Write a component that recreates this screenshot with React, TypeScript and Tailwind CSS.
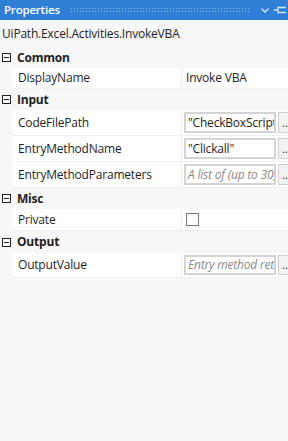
import React from 'react';

type Prop = {
  name: string;
  kind: 'text' | 'box' | 'hint' | 'check';
  value?: string;
  h: string;
};

const groups: { title: string; h: string; props: Prop[] }[] = [
  {
    title: 'Common',
    h: 'h-[21px]',
    props: [{ name: 'DisplayName', kind: 'text', value: 'Invoke VBA', h: 'h-[21px]' }],
  },
  {
    title: 'Input',
    h: 'h-[21px]',
    props: [
      { name: 'CodeFilePath', kind: 'box', value: '"CheckBoxScript.txt"', h: 'h-[26px]' },
      { name: 'EntryMethodName', kind: 'box', value: '"Clickall"', h: 'h-[26px]' },
      { name: 'EntryMethodParameters', kind: 'hint', value: 'A list of (up to 30) parameters', h: 'h-[26px]' },
    ],
  },
  {
    title: 'Misc',
    h: 'h-[21px]',
    props: [{ name: 'Private', kind: 'check', h: 'h-[22px]' }],
  },
  {
    title: 'Output',
    h: 'h-[22px]',
    props: [{ name: 'OutputValue', kind: 'hint', value: 'Entry method return value', h: 'h-[25px]' }],
  },
];

function Minus() {
  return (
    <svg width="9" height="9" viewBox="0 0 9 9" className="shrink-0">
      <rect x="0.5" y="0.5" width="8" height="8" fill="white" stroke="#222" />
      <line x1="2" y1="4.5" x2="7" y2="4.5" stroke="#222" />
    </svg>
  );
}

function Value({ p }: { p: Prop }) {
  if (p.kind === 'text') {
    return <span className="pl-[4px] text-[12px] tracking-[-0.2px] text-[#1e1e1e]">{p.value}</span>;
  }
  if (p.kind === 'check') {
    return <div className="ml-[4px] h-[13px] w-[13px] border border-[#777] bg-white" />;
  }
  return (
    <div className="flex h-full w-full items-center gap-[2px] overflow-hidden py-[2px] pl-[2px]">
      <div className="flex h-full w-[92px] shrink-0 items-center overflow-hidden whitespace-nowrap border-2 border-[#d4d4d4] bg-white pl-[2px]">
        <span
          className={
            p.kind === 'hint'
              ? 'text-[12px] tracking-[-0.2px] italic text-[#8a8a8a]'
              : 'text-[12px] tracking-[-0.2px] text-[#1e1e1e]'
          }
        >
          {p.value}
        </span>
      </div>
      <div className="flex h-full w-[16px] shrink-0 items-end border border-[#cfcfcf] bg-[#f2f2f2] pb-[4px] pl-[3px] text-[11px] leading-none text-[#222]">
        ...
      </div>
    </div>
  );
}

export default function App() {
  return (
    <div
      className="h-[441px] w-[288px] overflow-hidden bg-[#f7f7f7]"
      style={{ fontFamily: '"Segoe UI", "Open Sans", "Noto Sans", sans-serif' }}
    >
      <div className="flex h-[20px] items-center bg-[#2f7fd6] pl-[4px] pr-[2px]">
        <span className="text-[11.5px] font-semibold leading-none tracking-[-0.2px] text-white">Properties</span>
        <div className="ml-[10px] h-[7px] flex-1 bg-[radial-gradient(circle,#86b6ea_0.8px,transparent_1px)] bg-[length:3px_3px]" />
        <svg width="10" height="8" viewBox="0 0 10 8" className="ml-[10px]">
          <path d="M1.5 2.5 L5 6 L8.5 2.5" fill="none" stroke="#cfe2f8" strokeWidth="1.4" />
        </svg>
        <svg width="12" height="10" viewBox="0 0 12 10" className="ml-[4px]">
          <path d="M0 5 H4 M4 1.5 V8.5 M4 2.5 H12 M4 7.5 H12" fill="none" stroke="#cfe2f8" strokeWidth="1.3" />
        </svg>
      </div>
      <div className="flex h-[27px] items-center pl-[2px] text-[12px] tracking-[-0.2px] text-[#1e1e1e]">
        UiPath.Excel.Activities.InvokeVBA
      </div>
      {groups.map((g) => (
        <div key={g.title}>
          <div className={`${g.h} flex items-center gap-[6px] pl-[2px]`}>
            <Minus />
            <span className="text-[12px] font-bold tracking-[-0.2px] text-[#1e1e1e]">{g.title}</span>
          </div>
          {g.props.map((p) => (
            <div key={p.name} className={`${p.h} ml-[12px] flex border-b border-[#f0f0f0] bg-white`}>
              <div className="flex w-[169px] shrink-0 items-center pl-[6px] text-[12px] tracking-[-0.2px] text-[#1e1e1e]">
                {p.name}
              </div>
              <div className="flex min-w-0 flex-1 items-center border-l border-[#f0f0f0]">
                <Value p={p} />
              </div>
            </div>
          ))}
        </div>
      ))}
    </div>
  );
}
